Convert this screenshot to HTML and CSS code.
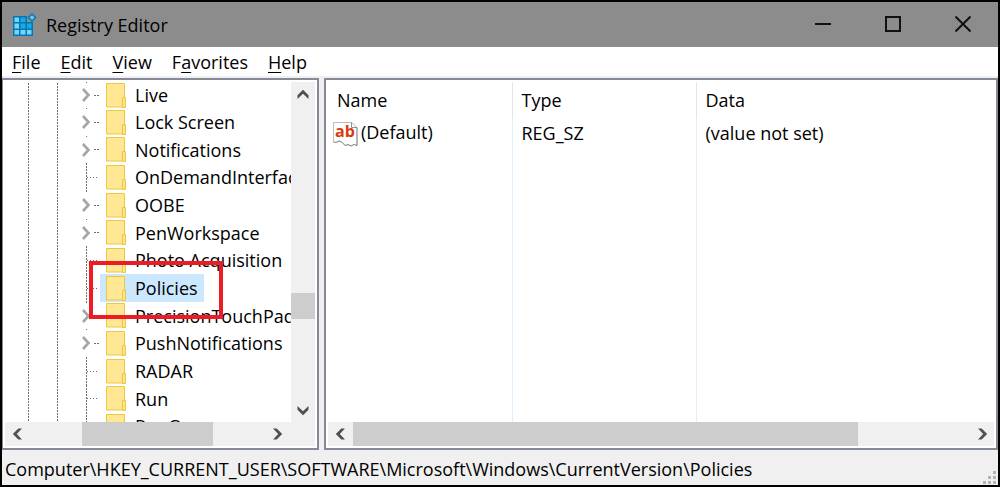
FILE: index.html
```html
<!DOCTYPE html>
<html lang="en">
<head>
    <meta charset="UTF-8">
    <meta name="viewport" content="width=device-width, initial-scale=1.0">
    <title>Registry Editor</title>
    <link rel="stylesheet" href="styles.css">
</head>
<body>
    <svg class="defs" aria-hidden="true">
        <symbol id="folder" viewBox="0 0 20 25">
            <path d="M.5 .5h18v23.5h-18z" fill="#ffe793" stroke="#ebc83f"/>
            <path d="M16.500 14.500h3v10h-3z" fill="#ffe38a" stroke="#ebc83f"/>
        </symbol>
        <symbol id="expand" viewBox="0 0 10 14">
            <path d="M2 1l5.500 6L2 13" fill="none" stroke="#a6a6a6" stroke-width="2.600"/>
        </symbol>
        <symbol id="arrow" viewBox="0 0 12 12">
            <path d="M.5 10V6.300L6 .8l5.500 5.500V10L6 4.800z" fill="#505050"/>
        </symbol>
    </svg>

    <div class="window">
        <header class="titlebar">
            <svg class="app-icon" viewBox="0 0 24 24" aria-hidden="true">
                <path d="M0 3h14v6h6v14H0z" fill="#0a74ac"/>
                <path d="M1.500 4.500h4.500v4.500H1.500zM1.500 10.500h4.500v5H1.500zM1.500 17h4.500v4.500H1.500zM7.500 17h5v4.500h-5zM14 17h4.500v4.500H14z" fill="#6fd8ff"/>
                <path d="M7.500 4.500h5v4.500h-5zM7.500 10.500h5v5h-5zM14 10.500h4.500v5H14z" fill="#17a9e6"/>
                <path d="M19 0l4.500 4.500L19 9l-4.500-4.500z" fill="#0a74ac"/>
                <path d="M19 2l2.500 2.500L19 7l-2.500-2.500z" fill="#5fd0fb"/>
            </svg>
            <h1>Registry Editor</h1>
            <div class="controls">
                <button type="button" aria-label="Minimize"><svg viewBox="0 0 16 16"><path d="M0 8h16"/></svg></button>
                <button type="button" aria-label="Maximize"><svg viewBox="0 0 16 16"><path d="M1 1h14v14H1z"/></svg></button>
                <button type="button" aria-label="Close"><svg viewBox="0 0 16 16"><path d="M.5 .5l15 15M15.500 .5l-15 15"/></svg></button>
            </div>
        </header>

        <nav class="menu">
            <a href="#"><u>F</u>ile</a>
            <a href="#"><u>E</u>dit</a>
            <a href="#"><u>V</u>iew</a>
            <a href="#">F<u>a</u>vorites</a>
            <a href="#"><u>H</u>elp</a>
        </nav>

        <main class="panes">
            <section class="pane tree-pane">
                <ul class="tree">
                    <li class="parent"><i class="branch"><svg><use href="#expand"/></svg></i><a href="#"><svg><use href="#folder"/></svg>Live</a></li>
                    <li class="parent"><i class="branch"><svg><use href="#expand"/></svg></i><a href="#"><svg><use href="#folder"/></svg>Lock Screen</a></li>
                    <li class="parent"><i class="branch"><svg><use href="#expand"/></svg></i><a href="#"><svg><use href="#folder"/></svg>Notifications</a></li>
                    <li><i class="branch"></i><a href="#"><svg><use href="#folder"/></svg>OnDemandInterfac</a></li>
                    <li class="parent"><i class="branch"><svg><use href="#expand"/></svg></i><a href="#"><svg><use href="#folder"/></svg>OOBE</a></li>
                    <li class="parent"><i class="branch"><svg><use href="#expand"/></svg></i><a href="#"><svg><use href="#folder"/></svg>PenWorkspace</a></li>
                    <li><i class="branch"></i><a href="#"><svg><use href="#folder"/></svg>Photo Acquisition</a></li>
                    <li class="selected"><i class="branch"></i><a href="#"><svg><use href="#folder"/></svg>Policies</a><span class="highlight"></span></li>
                    <li class="parent"><i class="branch"><svg><use href="#expand"/></svg></i><a href="#"><svg><use href="#folder"/></svg>PrecisionTouchPad</a></li>
                    <li class="parent"><i class="branch"><svg><use href="#expand"/></svg></i><a href="#"><svg><use href="#folder"/></svg>PushNotifications</a></li>
                    <li><i class="branch"></i><a href="#"><svg><use href="#folder"/></svg>RADAR</a></li>
                    <li><i class="branch"></i><a href="#"><svg><use href="#folder"/></svg>Run</a></li>
                    <li><i class="branch"></i><a href="#"><svg><use href="#folder"/></svg>RunOnce</a></li>
                </ul>
                <div class="scroll vertical">
                    <button type="button" aria-label="Scroll up"><svg><use href="#arrow"/></svg></button>
                    <div class="track"><div class="thumb"></div></div>
                    <button type="button" class="down" aria-label="Scroll down"><svg><use href="#arrow"/></svg></button>
                </div>
                <div class="scroll horizontal">
                    <button type="button" class="left" aria-label="Scroll left"><svg><use href="#arrow"/></svg></button>
                    <div class="track"><div class="thumb"></div></div>
                    <button type="button" class="right" aria-label="Scroll right"><svg><use href="#arrow"/></svg></button>
                </div>
            </section>

            <section class="pane values-pane">
                <div class="values">
                    <table>
                        <thead>
                            <tr><th>Name</th><th>Type</th><th>Data</th></tr>
                        </thead>
                        <tbody>
                            <tr>
                                <td class="name">
                                    <svg class="string-icon" viewBox="0 0 25 25" aria-hidden="true">
                                        <path d="M.5 .5h18l5.500 5v18l-3-1-3 1.500-3-1.500-3 1-2.500-3-3.500-1.500-3 1.500L.5 20z" fill="#fff" stroke="#bdbdbd"/>
                                        <path d="M18.500 .5v5H24v18l-3-1-3 1.500-3-1.500-3 1-2.500-3-3.500-1.500-3 1.500L.5 20" fill="none" stroke="#8f8f8f"/>
                                        <text x="12" y="15">ab</text>
                                    </svg>(Default)
                                </td>
                                <td>REG_SZ</td>
                                <td>(value not set)</td>
                            </tr>
                            <tr class="filler"><td></td><td></td><td></td></tr>
                        </tbody>
                    </table>
                </div>
                <div class="scroll horizontal">
                    <button type="button" class="left" aria-label="Scroll left"><svg><use href="#arrow"/></svg></button>
                    <div class="track"><div class="thumb"></div></div>
                    <button type="button" class="right" aria-label="Scroll right"><svg><use href="#arrow"/></svg></button>
                </div>
            </section>
        </main>

        <footer class="statusbar">
            <span>Computer\HKEY_CURRENT_USER\SOFTWARE\Microsoft\Windows\CurrentVersion\Policies</span>
            <svg class="grip" viewBox="0 0 13 13" aria-hidden="true">
                <path d="M10 0h3v3h-3zM5 5h3v3H5zM10 5h3v3h-3zM0 10h3v3H0zM5 10h3v3H5zM10 10h3v3h-3z" fill="#b4b4b4"/>
            </svg>
        </footer>
    </div>
</body>
</html>
```
FILE: styles.css
```css
* {
    box-sizing: border-box;
}
body {
    margin: 0;
    font-family: "Open Sans", "Noto Sans", sans-serif;
    font-size: 18px;
    line-height: 28px;
    color: #000;
}
a {
    color: inherit;
    text-decoration: none;
}
button {
    padding: 0;
    border: 0;
    background: none;
    display: flex;
    align-items: center;
    justify-content: center;
}
.defs {
    display: none;
}
.window {
    height: 100vh;
    border: 2px solid #000;
    background-color: #f0f0f0;
    display: flex;
    flex-direction: column;
}

/* title bar */
.titlebar {
    height: 45px;
    padding-left: 11px;
    background-color: #8c8c8c;
    display: flex;
    align-items: center;
}
.app-icon {
    width: 24px;
    height: 24px;
    margin-right: 9px;
}
.titlebar h1 {
    margin: 0;
    font-size: 18px;
    line-height: 24px;
    font-weight: normal;
}
.controls {
    margin-left: auto;
    display: flex;
    align-self: stretch;
}
.controls button {
    width: 70px;
    padding-bottom: 2px;
}
.controls svg {
    width: 16px;
    height: 16px;
    fill: none;
    stroke: #111;
    stroke-width: 2;
}

/* menu */
.menu {
    height: 31px;
    padding-left: 10px;
    background-color: #fff;
    border-bottom: 2px solid #f0f0f0;
    display: flex;
    align-items: center;
    gap: 20px;
}
.menu u {
    text-underline-offset: 3px;
    text-decoration-thickness: 1px;
}

/* panes */
.panes {
    flex: 1;
    min-height: 0;
    display: flex;
    gap: 5px;
}
.pane {
    border: 2px solid #858b96;
    background-color: #fff;
    padding: 2px;
    display: grid;
    min-height: 0;
}
.tree-pane {
    flex: 0 0 317px;
    grid-template: 1fr 24px / 1fr 24px;
    border-left-width: 1px;
}
.values-pane {
    flex: 1;
    grid-template: 1fr 24px / 1fr;
}

/* tree */
.tree {
    margin: 0;
    padding: 0;
    list-style: none;
    overflow: hidden;
    min-height: 0;
    background-image: repeating-linear-gradient(#fff 0 1px, transparent 1px 3px), linear-gradient(#707070, #707070), linear-gradient(#707070, #707070);
    background-size: 60px 100%, 1px 100%, 1px 100%;
    background-position: 0 0, 23px 0, 52px 0;
    background-repeat: no-repeat;
}
.tree li {
    position: relative;
    height: 28px;
    padding-left: 71px;
    display: flex;
    white-space: nowrap;
}
.tree li:nth-child(3n) {
    height: 27px;
}
.tree li:first-child {
    height: 26px;
}
.branch {
    flex: 0 0 24px;
    display: flex;
    align-items: center;
    background: repeating-linear-gradient(90deg, #707070 0 1px, transparent 1px 3px) 11px 50% / 12px 1px no-repeat,
        repeating-linear-gradient(#707070 0 2px, transparent 2px 3px) 10px 0 / 1px 100% no-repeat;
}
.parent .branch {
    background: repeating-linear-gradient(90deg, #707070 0 2px, transparent 2px 3px) 18px 50% / 5px 1px no-repeat,
        linear-gradient(#707070, #707070) 10px 0 / 1px 1px no-repeat;
}
.branch svg {
    width: 10px;
    height: 14px;
    margin-left: 5px;
}
.tree a {
    padding: 0 6px;
    display: flex;
    align-items: center;
    gap: 9px;
}
.tree a svg {
    width: 20px;
    height: 25px;
}
.selected a {
    background-color: #cce8ff;
}
.highlight {
    position: absolute;
    z-index: 1;
    left: 84px;
    top: -13px;
    width: 134px;
    height: 58px;
    border: 4px solid #ed1c24;
}

/* scroll bars */
.scroll {
    background-color: #f0f0f0;
    display: flex;
}
.vertical {
    flex-direction: column;
}
.tree-pane .horizontal {
    grid-column: 1 / 3;
    padding-right: 26px;
}
.scroll button {
    flex: 0 0 25px;
}
.scroll svg {
    width: 12px;
    height: 12px;
}
.down svg {
    transform: rotate(180deg);
}
.left svg {
    transform: rotate(-90deg);
}
.right svg {
    transform: rotate(90deg);
}
.track {
    flex: 1;
    display: flex;
}
.vertical .track {
    flex-direction: column;
}
.thumb {
    background-color: #cdcdcd;
}
.vertical .thumb {
    height: 9%;
    margin-top: 186px;
}
.tree-pane .horizontal .thumb {
    width: 56%;
    margin-left: 52px;
}
.values-pane .thumb {
    width: 82%;
}

/* value list */
.values {
    min-height: 0;
}
table {
    width: 100%;
    height: 100%;
    table-layout: fixed;
    border-collapse: collapse;
}
th, td {
    padding: 0 0 0 9px;
    text-align: left;
    font-weight: normal;
}
th:not(:last-child) {
    width: 184px;
    border-right: 1px solid #e5e5e5;
}
th {
    height: 35px;
}
td {
    height: 31px;
}
td:not(:last-child) {
    border-right: 1px solid #e0effc;
}
td.name {
    padding-left: 5px;
    white-space: nowrap;
}
.string-icon {
    width: 25px;
    height: 25px;
    margin-right: 3px;
    vertical-align: middle;
}
.string-icon text {
    font-size: 16px;
    font-weight: bold;
    text-anchor: middle;
    fill: #d83b10;
}
.filler td {
    height: auto;
}

/* status bar */
.statusbar {
    height: 35px;
    padding: 3px 2px 1px 3px;
    display: flex;
    align-items: center;
    justify-content: space-between;
}
.grip {
    width: 13px;
    height: 13px;
    align-self: flex-end;
}
```
